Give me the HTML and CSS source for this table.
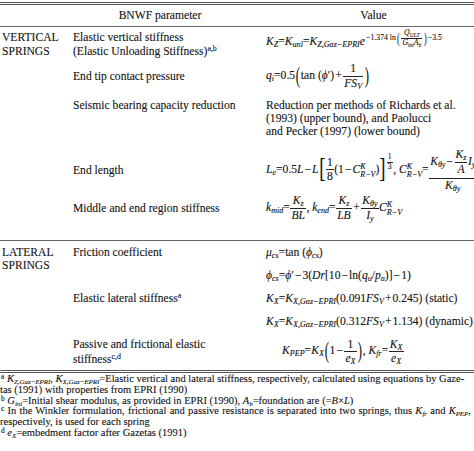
FILE: index.html
```html
<!DOCTYPE html>
<html>
<head>
<meta charset="utf-8">
<link rel="stylesheet" href="styles.css">
</head>
<body>
<div class="table">
  <div class="rule-top"></div>
  <div class="head">
    <div class="h1"></div>
    <div class="h2">BNWF parameter</div>
    <div class="h3">Value</div>
  </div>
  <div class="rule"></div>

  <div class="row r1">
    <div class="c1">VERTICAL<br>SPRINGS</div>
    <div class="c2">Elastic vertical stiffness<br>(Elastic Unloading Stiffness)<sup>a,b</sup></div>
    <div class="c3"><span class="m"><i>K</i><sub><i>Z</i></sub>=<i>K</i><sub><i>unl</i></sub>=<i>K</i><sub><i>Z,Gaz−EPRI</i></sub><i>e</i><span class="exp">−1.374 ln<span class="bps">(</span><span class="frac"><span class="num"><i>Q</i><sub><i>ULT</i></sub></span><span class="den"><i>G</i><sub><i>ini</i></sub><i>A</i><sub><i>b</i></sub></span></span><span class="bps">)</span>−3.5</span></span></div>
  </div>

  <div class="row r2">
    <div class="c1"></div>
    <div class="c2">End tip contact pressure</div>
    <div class="c3"><span class="m"><i>q</i><sub><i>i</i></sub>=0.5<span class="bp">(</span>tan (<i>ϕ</i>′)<span class="op">+</span><span class="frac"><span class="num">1</span><span class="den"><i>FS</i><sub><i>V</i></sub></span></span><span class="bp">)</span></span></div>
  </div>

  <div class="row r3">
    <div class="c1"></div>
    <div class="c2">Seismic bearing capacity reduction</div>
    <div class="c3">Reduction per methods of Richards et al.<br>(1993) (upper bound), and Paolucci<br>and Pecker (1997) (lower bound)</div>
  </div>

  <div class="row r4">
    <div class="c1"></div>
    <div class="c2">End length</div>
    <div class="c3"><span class="m"><i>L</i><sub><i>e</i></sub>=0.5<i>L</i><span class="op">−</span><i>L</i><span class="bb">[</span><span class="frac"><span class="num">1</span><span class="den">8</span></span>(1<span class="op">−</span><i>C</i><span class="ss"><i>K</i><i>R−V</i></span>)<span class="bb">]</span><span class="pow"><span class="frac"><span class="num">1</span><span class="den">3</span></span></span>, <i>C</i><span class="ss"><i>K</i><i>R−V</i></span>=<span class="frac big"><span class="num"><i>K</i><sub><i>θy</i></sub><span class="op">−</span><span class="frac"><span class="num"><i>K</i><sub><i>z</i></sub></span><span class="den"><i>A</i></span></span><i>I</i><sub><i>y</i></sub></span><span class="den"><i>K</i><sub><i>θy</i></sub></span></span></span></div>
  </div>

  <div class="row r5">
    <div class="c1"></div>
    <div class="c2">Middle and end region stiffness</div>
    <div class="c3"><span class="m"><i>k</i><sub><i>mid</i></sub>=<span class="frac"><span class="num"><i>K</i><sub><i>z</i></sub></span><span class="den"><i>BL</i></span></span>, <i>k</i><sub><i>end</i></sub>=<span class="frac"><span class="num"><i>K</i><sub><i>z</i></sub></span><span class="den"><i>LB</i></span></span><span class="op">+</span><span class="frac"><span class="num"><i>K</i><sub><i>θy</i></sub></span><span class="den"><i>I</i><sub><i>y</i></sub></span></span><i>C</i><span class="ss"><i>K</i><i>R−V</i></span></span></div>
  </div>

  <div class="rule mid"></div>

  <div class="row r6">
    <div class="c1">LATERAL<br>SPRINGS</div>
    <div class="c2">Friction coefficient</div>
    <div class="c3">
      <div class="fl"><i>μ</i><sub><i>cs</i></sub>=tan (<i>ϕ</i><sub><i>cs</i></sub>)</div>
      <div class="fl"><i>ϕ</i><sub><i>cs</i></sub>=<i>ϕ</i>′<span class="op">−</span>3(<i>Dr</i>[10<span class="op">−</span>ln(<i>q</i><sub><i>u</i></sub>/<i>p</i><sub><i>a</i></sub>)]<span class="op">−</span>1)</div>
    </div>
  </div>

  <div class="row r7">
    <div class="c1"></div>
    <div class="c2">Elastic lateral stiffness<sup>a</sup></div>
    <div class="c3">
      <div class="fl"><i>K</i><sub><i>X</i></sub>=<i>K</i><sub><i>X,Gaz−EPRI</i></sub>(0.091<i>FS</i><sub><i>V</i></sub><span class="op">+</span>0.245) (static)</div>
      <div class="fl"><i>K</i><sub><i>X</i></sub>=<i>K</i><sub><i>X,Gaz−EPRI</i></sub>(0.312<i>FS</i><sub><i>V</i></sub><span class="op">+</span>1.134) (dynamic)</div>
    </div>
  </div>

  <div class="row r8">
    <div class="c1"></div>
    <div class="c2">Passive and frictional elastic<br>stiffness<sup>c,d</sup></div>
    <div class="c3"><span class="m pep"><i>K</i><sub><i>PEP</i></sub>=<i>K</i><sub><i>X</i></sub><span class="bp">(</span>1<span class="op">−</span><span class="frac"><span class="num">1</span><span class="den"><i>e</i><sub><i>X</i></sub></span></span><span class="bp">)</span>, <i>K</i><sub><i>fr</i></sub>=<span class="frac"><span class="num"><i>K</i><sub><i>X</i></sub></span><span class="den"><i>e</i><sub><i>X</i></sub></span></span></span></div>
  </div>

  <div class="rule-bottom"></div>

  <div class="notes">
    <div class="nl"><sup>a</sup> <i>K</i><sub><i>Z,Gaz−EPRI</i></sub>, <i>K</i><sub><i>X,Gaz−EPRI</i></sub>=Elastic vertical and lateral stiffness, respectively, calculated using equations by Gaze-</div>
    <div class="nl cont">tas (1991) with properties from EPRI (1990)</div>
    <div class="nl"><sup>b</sup> <i>G</i><sub><i>ini</i></sub>=Initial shear modulus, as provided in EPRI (1990), <i>A</i><sub><i>b</i></sub>=foundation are (=<i>B</i>×<i>L</i>)</div>
    <div class="nl wide"><sup>c</sup> In the Winkler formulation, frictional and passive resistance is separated into two springs, thus <i>K</i><sub><i>fr</i></sub> and <i>K</i><sub><i>PEP</i></sub>,</div>
    <div class="nl cont">respectively, is used for each spring</div>
    <div class="nl"><sup>d</sup> <i>e</i><sub><i>X</i></sub>=embedment factor after Gazetas (1991)</div>
  </div>
</div>
</body>
</html>
```

FILE: styles.css
```css
html, body {
  margin: 0;
  padding: 0;
  background: #fff;
}
body {
  width: 474px;
  height: 451px;
  overflow: hidden;
  color: #111;
  font-family: "Liberation Serif", "DejaVu Serif", serif;
  font-size: 11.6px;
  line-height: 13px;
}
.table {
  width: 474px;
  padding-top: 2px;
  -webkit-text-stroke: 0.1px #111;
}
.rule-top {
  border-top: 3px double #555;
}
.rule-bottom {
  border-top: 3px double #555;
}
.rule {
  border-top: 1px solid #666;
}
.rule.mid {
  margin-top: 18px;
}
.head {
  display: flex;
  height: 21px;
  align-items: center;
}
.h1 {
  width: 73px;
  flex: none;
}
.h2 {
  width: 174px;
  flex: none;
  text-align: center;
}
.h3 {
  flex: 1;
  text-align: center;
  padding-left: 26px;
}
.row {
  display: flex;
}
.c1 {
  width: 73px;
  flex: none;
  padding-left: 2px;
  box-sizing: border-box;
}
.c2 {
  width: 193px;
  flex: none;
}
.c3 {
  flex: 1;
  white-space: nowrap;
}
sup, sub {
  font-size: 0.68em;
  line-height: 0;
}
sup {
  vertical-align: 0.45em;
}
sub {
  vertical-align: -0.3em;
}
.m, .fl {
  font-size: 11.6px;
}
.m sub, .fl sub {
  font-size: 0.7em;
}
.notes sub {
  font-size: 0.66em;
}
.op {
  margin: 0 1px;
}

/* math pieces */
.frac {
  display: inline-flex;
  flex-direction: column;
  vertical-align: middle;
  text-align: center;
  line-height: 1.15;
  margin: 0 0.5px;
}
.frac .num {
  border-bottom: 1px solid #222;
  padding: 0 1px;
}
.frac .den {
  padding: 0 1px;
}
.frac.big .num {
  padding: 0 1px 1px;
}
.bp, .bb {
  display: inline-block;
  font-size: 2em;
  line-height: 0;
  vertical-align: -0.17em;
  transform: scaleX(0.55);
  margin: 0 -1px;
}
.bb {
  transform: scaleX(0.7);
  font-size: 2.3em;
}
.bps {
  display: inline-block;
  font-size: 1.9em;
  line-height: 0;
  vertical-align: -0.2em;
  transform: scaleX(0.55);
}
.exp {
  display: inline-block;
  font-size: 7.8px;
  vertical-align: 0.6em;
  line-height: 1;
  margin-left: 1px;
}
.ss {
  display: inline-flex;
  flex-direction: column;
  font-size: 0.7em;
  line-height: 1.05;
  vertical-align: 4px;
}
.pow {
  display: inline-block;
  font-size: 0.66em;
  vertical-align: 1.1em;
}

/* rows */
.r1 {
  height: 34px;
}
.r1 .c1, .r1 .c2 {
  padding-top: 4px;
  line-height: 14px;
}
.r1 .c3 {
  padding-top: 2px;
}
.r2 {
  height: 30px;
  align-items: center;
}
.r3 {
  height: 55px;
}
.r3 .c2, .r3 .c3 {
  padding-top: 8px;
}
.r4 {
  height: 48px;
  align-items: center;
}
.r5 {
  height: 28px;
  align-items: center;
}
.r6, .r7 {
  height: 46px;
}
.r6 .c1 {
  padding-top: 5px;
}
.r6 .c2, .r7 .c2 {
  line-height: 23px;
}
.fl {
  height: 23px;
  line-height: 23px;
}
.r8 {
  height: 37px;
  align-items: center;
}
.r8 .c2 {
  line-height: 15px;
}
.pep {
  margin-left: 16px;
}

/* footnotes */
.notes {
  font-size: 10.5px;
  line-height: 10.8px;
  padding-top: 1px;
  white-space: nowrap;
}
.nl {
  padding-left: 1px;
}
.nl.cont {
  padding-left: 0;
}
.nl.wide {
  word-spacing: 0.6px;
}
.notes sup {
  font-size: 0.7em;
}
```
